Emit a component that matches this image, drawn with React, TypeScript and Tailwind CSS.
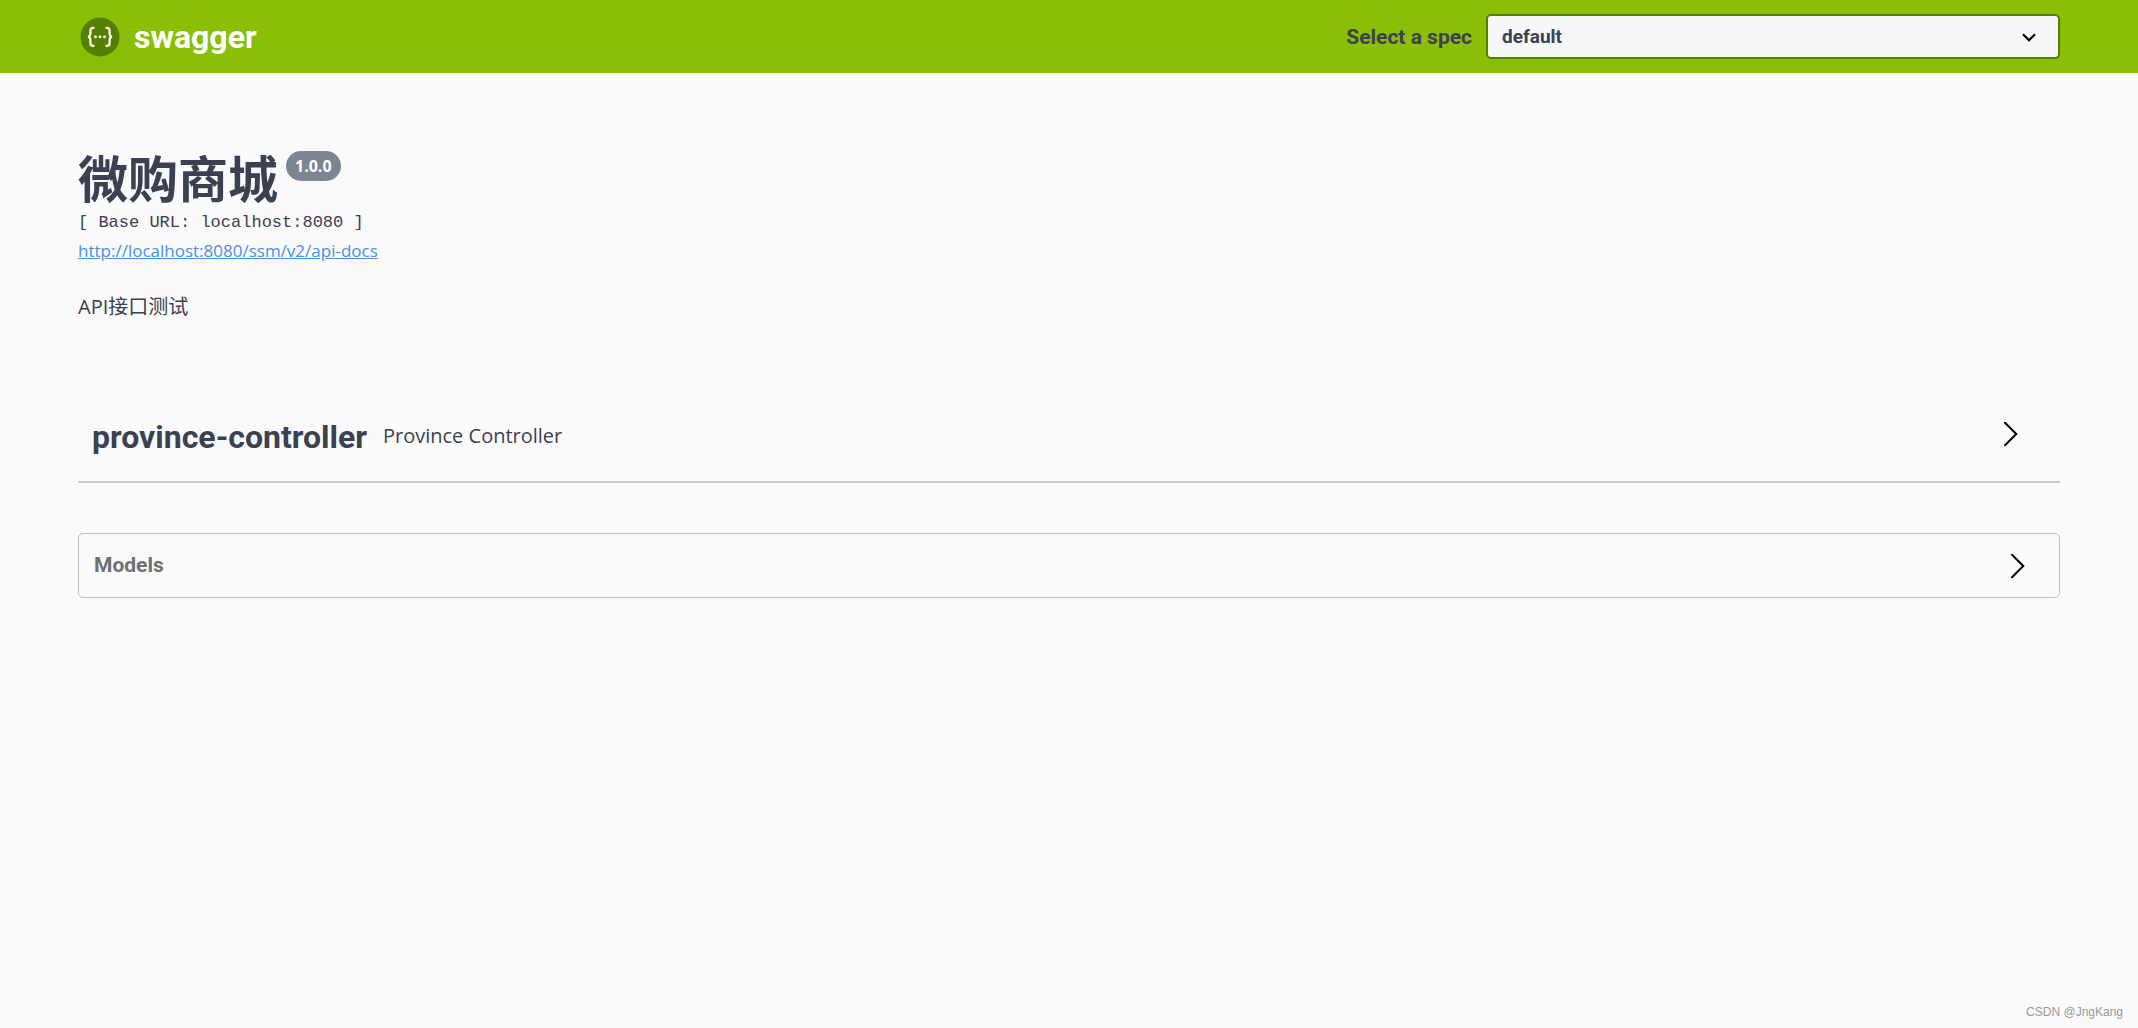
import { useState } from "react";

interface Tag {
  name: string;
  description: string;
}

const TAGS: Tag[] = [{ name: "province-controller", description: "Province Controller" }];

const SPECS = ["default"];

function Logo() {
  return (
    <svg viewBox="0 0 40 40" className="size-10 shrink-0" aria-hidden="true">
      <circle cx="20" cy="20" r="19.5" fill="#547f00" />
      <g fill="none" stroke="#f4f8ea" strokeWidth="2.3">
        <path d="M14.5 10.8h-1.2c-2 0-2.9 1-2.9 2.8v3c0 2-.8 3-2.4 3.2 1.6.2 2.4 1.2 2.4 3.2v3c0 1.8.9 2.8 2.9 2.8h1.2" />
        <path d="M25.5 10.8h1.2c2 0 2.9 1 2.9 2.8v3c0 2 .8 3 2.4 3.2-1.6.2-2.4 1.2-2.4 3.2v3c0 1.8-.9 2.8-2.9 2.8h-1.2" />
      </g>
      <g fill="#f4f8ea">
        <circle cx="15.5" cy="19.8" r="1.5" />
        <circle cx="20" cy="19.8" r="1.5" />
        <circle cx="24.5" cy="19.8" r="1.5" />
      </g>
    </svg>
  );
}

function Arrow({ open }: { open: boolean }) {
  return (
    <svg
      viewBox="0 0 26 26"
      className={open ? "size-[26px] rotate-90" : "size-[26px]"}
      fill="none"
      stroke="#000"
      strokeWidth="2"
      strokeLinecap="round"
      aria-hidden="true"
    >
      <path d="M7 1.8 18.3 13 7 24.2" />
    </svg>
  );
}

function Topbar() {
  const [spec, setSpec] = useState(SPECS[0]);

  return (
    <header className="bg-[#89bf04] px-[78px] py-[14px]">
      <div className="flex items-center">
        <a href="#" className="flex flex-1 items-center gap-[14px] pt-px pl-0.5 text-white">
          <Logo />
          <span className="text-[32px] leading-10 font-bold">swagger</span>
        </a>
        <div className="flex min-w-[712px] items-center justify-end gap-[14px]">
          <label htmlFor="spec" className="pt-0.5 text-[21px] font-bold whitespace-nowrap">
            Select a spec
          </label>
          <div className="relative w-[574px]">
            <select
              id="spec"
              value={spec}
              onChange={(e) => setSpec(e.target.value)}
              className="block h-[45px] w-full appearance-none rounded-[5px] border-2 border-[#547f00] bg-[#f7f7f7] pt-0.5 pr-12 pl-[14px] text-[19px] font-bold"
            >
              {SPECS.map((name) => (
                <option key={name}>{name}</option>
              ))}
            </select>
            <svg
              viewBox="0 0 14 9"
              className="pointer-events-none absolute top-[19px] right-6 h-[9px] w-[14px]"
              fill="none"
              stroke="#000"
              strokeWidth="2.2"
              aria-hidden="true"
            >
              <path d="M1 1.2 7 7.2 13 1.2" />
            </svg>
          </div>
        </div>
      </div>
    </header>
  );
}

function Info() {
  return (
    <section className="pt-[70px] pb-[70px] font-['Open_Sans','Noto_Sans_CJK_SC',sans-serif]">
      <div className="flex items-start gap-2 pt-2">
        <h1 className="font-['Noto_Sans_CJK_SC',sans-serif] text-[50px] leading-[50px] font-bold">微购商城</h1>
        <span className="rounded-full bg-[#7d8492] px-[9px] text-base leading-[30px] font-bold text-white">
          1.0.0
        </span>
      </div>
      <pre className="pt-[10px] font-['Liberation_Mono',monospace] text-[17px] leading-6">
        [ Base URL: localhost:8080 ]
      </pre>
      <a href="http://localhost:8080/ssm/v2/api-docs" className="text-[17px] leading-8 text-[#4990e2] underline">
        http://localhost:8080/ssm/v2/api-docs
      </a>
      <p className="pt-6 text-xl leading-8">API接口测试</p>
    </section>
  );
}

function TagSection({ tag }: { tag: Tag }) {
  const [open, setOpen] = useState(false);

  return (
    <button
      type="button"
      aria-expanded={open}
      onClick={() => setOpen(!open)}
      className="flex w-full items-start border-b-2 border-[#c8c9cb] py-6 pr-9 pl-[14px] text-left"
    >
      <span className="text-[32px] leading-10 font-bold">{tag.name}</span>
      <span className="flex-1 pl-4 font-['Open_Sans',sans-serif] text-xl leading-[38px]">{tag.description}</span>
      <span className="py-1">
        <Arrow open={open} />
      </span>
    </button>
  );
}

function Models() {
  const [open, setOpen] = useState(false);

  return (
    <section className="mt-[50px] rounded-[5px] border border-[#bfc0c4]">
      <button
        type="button"
        aria-expanded={open}
        onClick={() => setOpen(!open)}
        className="flex w-full items-center justify-between py-4 pr-7 pl-[15px] text-[21px] leading-[31px] font-bold text-[#707070]"
      >
        Models
        <Arrow open={open} />
      </button>
    </section>
  );
}

export default function App() {
  return (
    <div className="flex min-h-screen flex-col bg-[#fafafa] font-['Roboto',sans-serif] text-[#3b4151]">
      <Topbar />
      <main className="flex-1 px-[78px]">
        <Info />
        {TAGS.map((tag) => (
          <TagSection key={tag.name} tag={tag} />
        ))}
        <Models />
      </main>
      <footer className="px-[15px] pb-2 text-right font-['Liberation_Sans',sans-serif] text-xs text-[#999]">
        CSDN @JngKang
      </footer>
    </div>
  );
}
